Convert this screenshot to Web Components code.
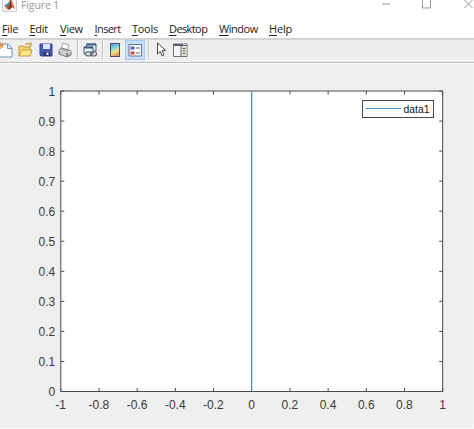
<!DOCTYPE html>
<html lang="en"><head><meta charset="utf-8"><title>Figure 1</title>
<style>html,body{margin:0;background:#fff}body{width:474px;height:429px;overflow:hidden}</style></head>
<body><figure-window></figure-window>
<script>
const define=(name,html,setup)=>customElements.define(name,class extends HTMLElement{
  connectedCallback(){
    if(this.shadowRoot)return;
    const root=this.attachShadow({mode:'open'});
    root.innerHTML=html;
    if(setup)setup.call(this,root);
  }
});

define('title-bar',`<style>
:host{display:flex;height:21px;font:10.5px/11px "Open Sans","Noto Sans",sans-serif;color:#999}
.logo{width:15px;height:13px;margin-left:2px}
.name{margin-left:4px;white-space:nowrap;letter-spacing:-.12px}
.controls{margin-left:auto;width:94px;height:12px;flex:none}
</style>
<svg class="logo" viewBox="0 0 15 13"><path d="M.5-2H14.5V11.5H.5Z" fill="#f5f5f5" stroke="#c9cdd0"/><path d="M2 6L6 3L8 0L7 7L5 8Z" fill="#478aa8"/><path d="M4 8L7 5L9-1L13 9L10 7L7 10Z" fill="#c74b22"/><path d="M8 1L9-1L10 7L7 10Z" fill="#702d28"/><path d="M9 0L11 5L10 7Z" fill="#f19b42"/></svg>
<span class="name"><slot></slot></span>
<svg class="controls" viewBox="380 0 94 12"><path d="M382 4H390M422.5-1V8H430.5V-1M464.5 0L472.5 8M472.5 0L464.5 8" fill="none" stroke="#999" stroke-width="1"/></svg>`);

define('menu-item',`<style>
:host{display:block;flex:none;white-space:nowrap}
u{text-decoration-thickness:1px;text-underline-offset:1.5px}
</style><u></u><span></span>`,function(r){
 const t=this.getAttribute('label');r.querySelector('u').textContent=t[0];r.querySelector('span').textContent=t.slice(1);
});
define('menu-bar',`<style>
:host{display:flex;height:17px;padding-left:2px;font:11px/16px "Open Sans","Noto Sans",sans-serif;color:#222}
</style>
<menu-item label="File" style="width:27.5px;letter-spacing:-.35px"></menu-item>
<menu-item label="Edit" style="width:30.5px;letter-spacing:-.3px"></menu-item>
<menu-item label="View" style="width:34.5px;letter-spacing:-.3px"></menu-item>
<menu-item label="Insert" style="width:37.5px;letter-spacing:-.6px"></menu-item>
<menu-item label="Tools" style="width:37px;letter-spacing:-.3px"></menu-item>
<menu-item label="Desktop" style="width:50px;letter-spacing:-.6px"></menu-item>
<menu-item label="Window" style="width:50px;letter-spacing:-.45px"></menu-item>
<menu-item label="Help" style="letter-spacing:-.2px"></menu-item>`);

const icons={
 create:`<path d="M-4 2H8L12 6V15H-4Z" fill="#fff" stroke="#7992ac"/><path d="M7.5 2V6.5H12" fill="#d9e7f2" stroke="#7992ac"/><path d="M0 0V7M-3 3.5H4M-2 1L3 6M3 1L-2 6" stroke="#e68e42" stroke-width="1.2"/>`,
 open:`<path d="M1 14V4H5L6 5H12V8" fill="#f5d66c" stroke="#c89b38"/><path d="M1 14L4 8H14L12 14Z" fill="#ffe88b" stroke="#c89b38"/><path d="M7 3Q10 0 13 3M13 0V4H10" fill="none" stroke="#cda14b" stroke-width="1.2"/>`,
 save:`<path d="M1 2H13V14H2L1 13Z" fill="#4858b5" stroke="#35418a"/><path d="M4 2H11V7H4Z" fill="#d9e4fa"/><path d="M4 10H11V14H4Z" fill="#303970"/><path d="M8.5 10.5V13" stroke="#eef" stroke-width="2"/>`,
 print:`<path d="M3 7L5 1L11 3L9 9" fill="#fff" stroke="#a3a7ac"/><path d="M1 8L4 6L13 9V13L9 15L1 12Z" fill="#b3b5b8" stroke="#777b80"/><path d="M1 8L9 11L13 9M3 11L8 13" fill="none" stroke="#eee"/><path d="M9 11V14" stroke="#555"/><path d="M10.5 12H12" stroke="#d6bd50"/>`,
 link:`<path d="M3.5 2H13V9H3.5Z" fill="#e9eff6" stroke="#405f87"/><path d="M4 2.5H13" stroke="#405f87" stroke-width="2"/><path d="M1 5H10V12H1Z" fill="#e9eff6" stroke="#405f87"/><path d="M1 5.5H10" stroke="#405f87" stroke-width="2"/><rect x="2.5" y="9.8" width="6.5" height="4" rx="2" fill="#ddd" stroke="#65707c" stroke-width="1.2"/><rect x="7.5" y="9.8" width="6" height="4" rx="2" fill="none" stroke="#65707c" stroke-width="1.2"/>`,
 color:`<defs><linearGradient id="g" x1="0" y1="0" x2=".35" y2="1"><stop stop-color="#788dde"/><stop offset=".4" stop-color="#6cd5df"/><stop offset=".7" stop-color="#f0e583"/><stop offset="1" stop-color="#e69b5b"/></linearGradient></defs><rect x="2.5" y="1.5" width="9" height="13" fill="url(#g)" stroke="#4a5367"/>`,
 legend:`<path d="M1 2.5H13.5V14H1Z" fill="#fafaff" stroke="#65758e"/><path d="M2.5 4.5H6.5V7.5H2.5Z" fill="#5260cc"/><path d="M2.5 9.5H6.5V12.5H2.5Z" fill="#d8494c"/><path d="M8 6H12M8 11H12" stroke="#606979" stroke-width="1.2"/>`,
 pointer:`<path d="M3.5 1V12L6.2 9.5L8.2 14L10 13L8 8.8L11.5 8.3Z" fill="#fff" stroke="#444"/>`,
 panel:`<path d="M.5 2H14V14.5H.5Z" fill="#f5f6f6" stroke="#6a7077"/><path d="M1 3H13.5" stroke="#59616a" stroke-width="2"/><path d="M8 4V14" stroke="#59616a"/><path d="M9 4H13.5V14H9Z" fill="#e5e1d3"/><path d="M9.5 6.5H12.5M9.5 9H12.5M9.5 11.5H12.5" stroke="#666"/><path d="M10 2.5H13" stroke="#ddd"/>`
};
define('tool-button',`<style>
:host{display:flex;width:15px;height:20px;flex:none;align-items:center;justify-content:center;box-sizing:border-box}
:host([active]){width:20px;background:#c6dff7;border:1px solid #a5cdf1}
svg{width:15px;height:16px;flex:none}
</style><svg viewBox="0 0 15 16" fill="none"></svg>`,function(r){r.querySelector('svg').innerHTML=icons[this.getAttribute('icon')];});
define('tool-separator',`<style>:host{width:1px;height:19px;background:#c2c2c2;border-right:1px solid #fafafa;flex:none}</style>`);
define('tool-bar',`<style>
:host{display:flex;align-items:flex-start;height:25px;box-sizing:border-box;border-top:2px solid #d1d2d1;border-bottom:1px solid #bdbebd;background:#eee}
</style>
<tool-button icon="create"></tool-button>
<tool-button icon="open" style="margin-left:3px"></tool-button>
<tool-button icon="save" style="margin-left:6px"></tool-button>
<tool-button icon="print" style="margin-left:4px"></tool-button>
<tool-separator style="margin-left:4px"></tool-separator>
<tool-button icon="link" style="margin-left:4px"></tool-button>
<tool-separator style="margin-left:4px"></tool-separator>
<tool-button icon="color" style="margin-left:4px"></tool-button>
<tool-button icon="legend" active style="margin-left:2px"></tool-button>
<tool-separator style="margin-left:3px"></tool-separator>
<tool-button icon="pointer" style="margin-left:4px"></tool-button>
<tool-button icon="panel" style="margin-left:4px"></tool-button>`);

define('plot-canvas',`<style>
:host{display:block;height:366px;background:#efefef;border-top:1px solid #fafafa;box-sizing:border-box}
svg{display:block;width:474px;height:365px}
text{font:12px "Liberation Sans",Arial,sans-serif;fill:#3a3a3a}
.axes{fill:none;stroke:#4b4b4b;stroke-width:1}
</style><svg viewBox="0 64 474 365">
<rect x="60.8" y="91" width="381.9" height="300.5" fill="#fff"/>
<g class="labels"></g><path class="axes"/>
<path d="M251.5 91.5V391" stroke="#438fc4"/><path d="M252.5 91.5V391" stroke="#c9e5f7"/>
<rect x="362.5" y="100.5" width="71" height="17" fill="#fff" stroke="#484848"/>
<path d="M366 108.5H401" stroke="#4390cd"/>
<text x="403.5" y="112.7" textLength="26" lengthAdjust="spacingAndGlyphs" style="font-size:10.8px;fill:#161616">data1</text>
<path d="M0 427.8H474V429H0ZM473 64H474V429H473Z" fill="#f8f8f8"/>
</svg>`,function(r){
 const L=60.8,R=442.7,T=91,B=391.5;let d=`M${L} ${T}H${R}V${B}H${L}Z`,s='';
 for(let i=0;i<=10;i++){
  const x=L+(R-L)*i/10,y=B-(B-T)*i/10;
  d+=`M${x} ${B}v-3.5M${x} ${T}v3.5M${L} ${y}h3.5M${R} ${y}h-3.5`;
  const xv=String((i*2-10)/10),yv=String(i/10);
  s+=`<text x="${x-.1}" y="408.9" text-anchor="middle">${xv}</text><text x="55.2" y="${y+4.9}" text-anchor="end">${yv}</text>`;
 }
 r.querySelector('.axes').setAttribute('d',d);r.querySelector('.labels').innerHTML=s;
});
define('figure-window',`<style>:host{display:flex;flex-direction:column;width:474px;height:429px;background:#fff;overflow:hidden}title-bar,menu-bar,tool-bar,plot-canvas{flex-shrink:0}</style>
<title-bar>Figure 1</title-bar><menu-bar></menu-bar><tool-bar></tool-bar><plot-canvas></plot-canvas>`);
</script></body></html>
